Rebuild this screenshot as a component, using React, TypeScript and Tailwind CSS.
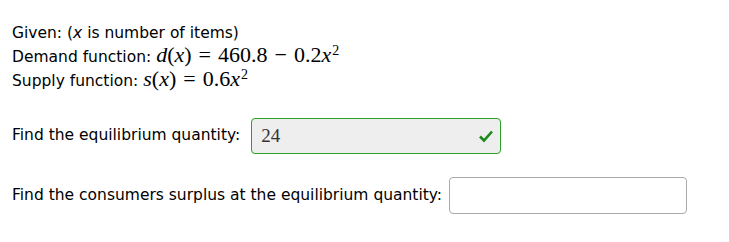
import React from 'react';

const serif = { fontFamily: '"Liberation Serif", "DejaVu Serif", serif' };

function MathV({ children }: { children: React.ReactNode }) {
  return <span className="italic">{children}</span>;
}

export default function App() {
  return (
    <div className="bg-white w-[729px] h-[242px] px-3 pt-[22px] text-[15.5px] text-black font-['DejaVu_Sans',sans-serif]">
      <div className="leading-[22px]">
        <div>
          Given: (<span className="italic">x</span> is number of items)
        </div>
        <div>
          Demand function:{' '}
          <span className="text-[22px] leading-none" style={serif}>
            <MathV>d</MathV>(<MathV>x</MathV>)<span className="mx-[7px]">=</span>460.8<span className="mx-[7px]">−</span>0.2<MathV>x</MathV>
            <sup className="text-[14px] leading-none -top-[0.5em] ml-[1px]">2</sup>
          </span>
        </div>
        <div>
          Supply function:{' '}
          <span className="text-[22px] leading-none" style={serif}>
            <MathV>s</MathV>(<MathV>x</MathV>)<span className="mx-[7px]">=</span>0.6<MathV>x</MathV>
            <sup className="text-[14px] leading-none -top-[0.5em] ml-[1px]">2</sup>
          </span>
        </div>
      </div>

      <div className="flex items-center mt-[26px]">
        <span>Find the equilibrium quantity:</span>
        <div className="ml-[11px] w-[250px] h-[36px] rounded-[4px] border border-[#2aa22a] bg-[#eeeeee] flex items-center justify-between pl-[9px] pr-[6px]">
          <span className="text-[19px] text-[#333]" style={serif}>24</span>
          <svg width="16" height="14" viewBox="0 0 16 14">
            <path d="M2 7.5 L6 11.5 L14 2.5" stroke="#1a8a1a" strokeWidth="2.6" fill="none" />
          </svg>
        </div>
      </div>

      <div className="flex items-center mt-[23px]">
        <span>Find the consumers surplus at the equilibrium quantity:</span>
        <div className="ml-[7px] w-[238px] h-[37px] rounded-[4px] border border-[#aaaaaa] bg-white" />
      </div>
    </div>
  );
}
